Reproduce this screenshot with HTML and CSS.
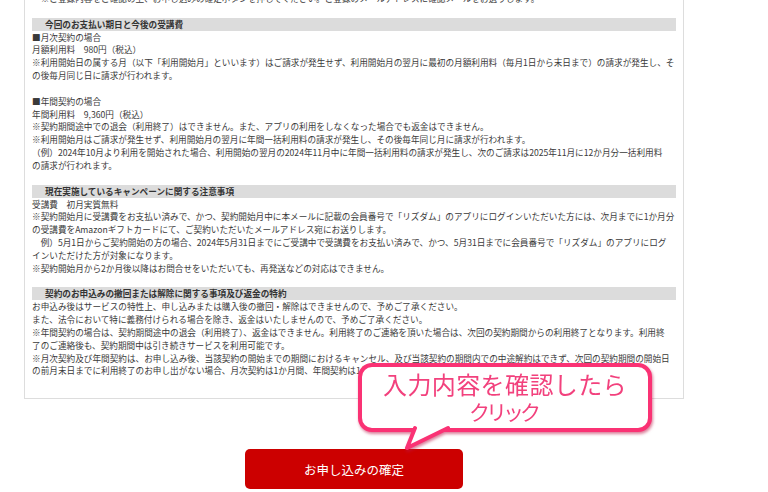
FILE: index.html
```html
<!DOCTYPE html>
<html lang="ja">
<head>
<meta charset="utf-8">
<title>お申し込み内容の確認</title>
<link rel="stylesheet" href="styles.css">
</head>
<body>
<div class="wrap">
  <div class="card">
    <p class="lead">　※ご登録内容をご確認の上、お申し込みの確定ボタンを押してください。ご登録のメールアドレスに確認メールをお送りします。</p>
    <section class="sec">
      <h3 class="sec-title">今回のお支払い期日と今後の受講費</h3>
      <p class="para">■月次契約の場合<br>月額利用料　980円（税込）<br>※利用開始日の属する月（以下「利用開始月」といいます）はご請求が発生せず、利用開始月の翌月に最初の月額利用料（毎月1日から末日まで）の請求が発生し、そ<br>の後毎月同じ日に請求が行われます。</p>
      <p class="para">■年間契約の場合<br>年間利用料　9,360円（税込）<br>※契約期間途中での退会（利用終了）はできません。また、アプリの利用をしなくなった場合でも返金はできません。<br>※利用開始月はご請求が発生せず、利用開始月の翌月に年間一括利用料の請求が発生し、その後毎年同じ月に請求が行われます。<br>（例）2024年10月より利用を開始された場合、利用開始の翌月の2024年11月中に年間一括利用料の請求が発生し、次のご請求は2025年11月に12か月分一括利用料<br>の請求が行われます。</p>
    </section>
    <section class="sec">
      <h3 class="sec-title">現在実施しているキャンペーンに関する注意事項</h3>
      <p class="para">受講費　初月実質無料<br>※契約開始月に受講費をお支払い済みで、かつ、契約開始月中に本メールに記載の会員番号で「リズダム」のアプリにログインいただいた方には、次月までに1か月分<br>の受講費をAmazonギフトカードにて、ご契約いただいたメールアドレス宛にお送りします。<br>　例）5月1日からご契約開始の方の場合、2024年5月31日までにご受講中で受講費をお支払い済みで、かつ、5月31日までに会員番号で「リズダム」のアプリにログ<br>インいただけた方が対象になります。<br>※契約開始月から2か月後以降はお問合せをいただいても、再発送などの対応はできません。</p>
    </section>
    <section class="sec last">
      <h3 class="sec-title">契約のお申込みの撤回または解除に関する事項及び返金の特約</h3>
      <p class="para">お申込み後はサービスの特性上、申し込みまたは購入後の撤回・解除はできませんので、予めご了承ください。<br>また、法令において特に義務付けられる場合を除き、返金はいたしませんので、予めご了承ください。<br>※年間契約の場合は、契約期間途中の退会（利用終了）、返金はできません。利用終了のご連絡を頂いた場合は、次回の契約期間からの利用終了となります。利用終<br>了のご連絡後も、契約期間中は引き続きサービスを利用可能です。<br>※月次契約及び年間契約は、お申し込み後、当該契約の開始までの期間におけるキャンセル、及び当該契約の期間内での中途解約はできず、次回の契約期間の開始日<br>の前月末日までに利用終了のお申し出がない場合、月次契約は1か月間、年間契約は1年間自動的に更新されます。</p>
    </section>
  </div>
  <div class="actions">
    <button class="submit" type="button">お申し込みの確定</button>
  </div>
</div>

<div class="bubble">
  <p class="bubble-main">入力内容を確認したら</p>
  <p class="bubble-sub">クリック</p>
  <svg class="bubble-tail" width="48" height="26" viewBox="0 0 48 26" aria-hidden="true">
    <polygon points="9,0 43,0 2,20" fill="#ffffff"/>
    <path d="M10,0 L2,20 L43,0" fill="none" stroke="#fa3274" stroke-width="4" stroke-linejoin="round" stroke-linecap="round"/>
  </svg>
</div>
</body>
</html>
```

FILE: styles.css
```css
html, body {
  margin: 0;
  padding: 0;
  background: #ffffff;
}

body {
  font-family: "Noto Sans CJK JP", "Noto Sans", sans-serif;
  color: #3a3a3a;
  overflow: hidden;
}

.wrap {
  width: 660px;
  padding-left: 24px;
}

.card {
  margin-top: -8px;
  border: 1px solid #dddddd;
  border-top: none;
  padding: 0 7px 21px 7px;
  font-size: 8.65px;
  line-height: 12.85px;
  white-space: nowrap;
}

.lead {
  margin: 0 0 12.85px 0;
}

.sec {
  margin: 0 0 12.85px 0;
}

.sec.last {
  margin-bottom: 0;
}

.sec-title {
  margin: 0;
  background: #dcdcdc;
  font-size: 8.65px;
  line-height: 12.85px;
  font-weight: bold;
  padding-left: 13px;
  color: #333333;
}

.para {
  margin: 0 0 12.85px 0;
}

.sec .para:last-child {
  margin-bottom: 0;
}

.actions {
  display: flex;
  justify-content: center;
  margin-top: 50px;
}

.submit {
  width: 218px;
  height: 40px;
  border: none;
  border-radius: 5px;
  background: #cc0000;
  color: #ffffff;
  font-family: "Noto Sans CJK JP", sans-serif;
  font-size: 12.5px;
  padding: 0;
  cursor: pointer;
}

.bubble {
  position: absolute;
  left: 358px;
  top: 363px;
  width: 286px;
  height: 61px;
  border: 4px solid #fa3274;
  border-radius: 14px;
  background: #ffffff;
  text-align: center;
  color: #f2417d;
  filter: drop-shadow(1px 2px 1.5px rgba(190, 20, 70, 0.55));
}

.bubble-main {
  margin: 3px 0 0 0;
  font-size: 24px;
  line-height: 28px;
  letter-spacing: 0.4px;
}

.bubble-sub {
  margin: 0;
  font-size: 21px;
  line-height: 26px;
  letter-spacing: -4px;
  text-indent: -4px;
}

.bubble-tail {
  position: absolute;
  left: 43px;
  top: 61px;
  overflow: visible;
}
```
